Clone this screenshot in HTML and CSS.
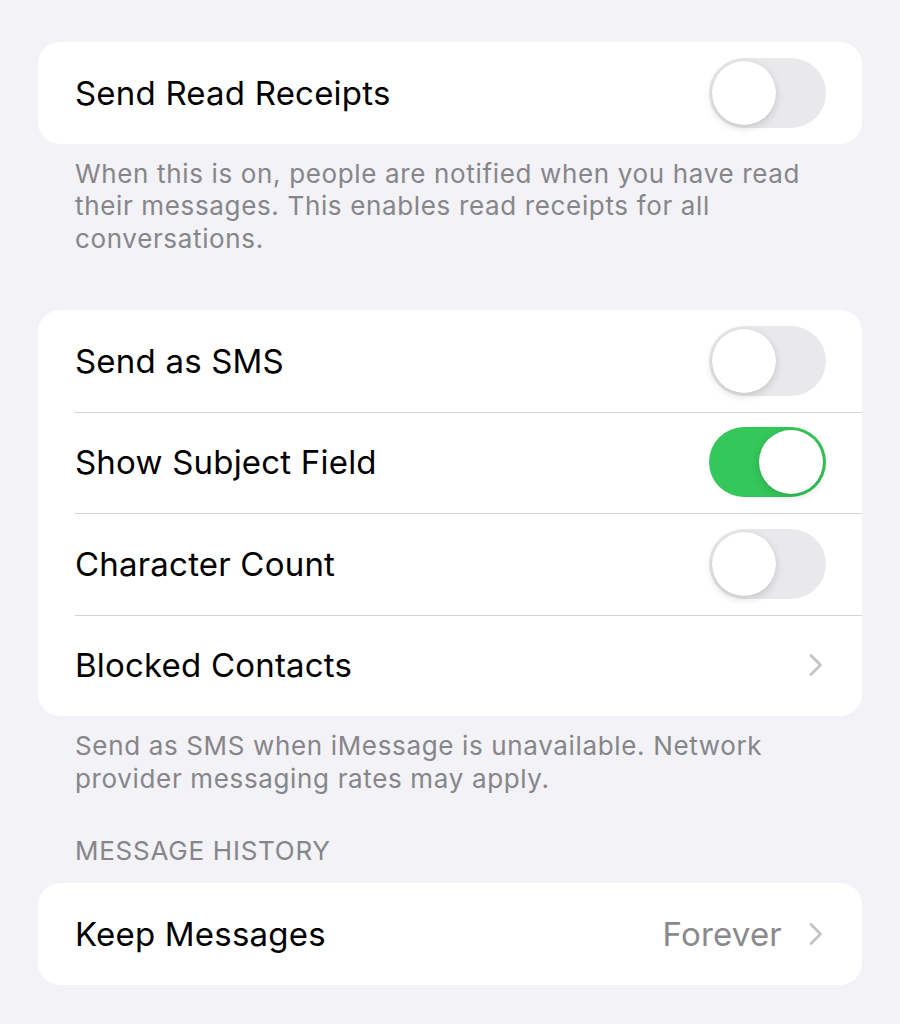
FILE: index.html
```html
<!DOCTYPE html>
<html>
<head>
<meta charset="utf-8">
<link rel="stylesheet" href="styles.css">
</head>
<body>
<div class="page">
  <div class="card">
    <div class="row">
      <span class="label">Send Read Receipts</span>
      <span class="toggle"><span class="knob"></span></span>
    </div>
  </div>
  <p class="footer">When this is on, people are notified when you have read their messages. This enables read receipts for all conversations.</p>

  <div class="card card-2">
    <div class="row">
      <span class="label">Send as SMS</span>
      <span class="toggle"><span class="knob"></span></span>
    </div>
    <div class="row">
      <span class="label">Show Subject Field</span>
      <span class="toggle on"><span class="knob"></span></span>
    </div>
    <div class="row">
      <span class="label">Character Count</span>
      <span class="toggle"><span class="knob"></span></span>
    </div>
    <div class="row">
      <span class="label">Blocked Contacts</span>
      <svg class="chevron" viewBox="0 0 16 24" width="16" height="24"><path d="M3 2.5 L12.5 12 L3 21.5" fill="none" stroke="#c4c4c7" stroke-width="2.8" stroke-linecap="round" stroke-linejoin="round"/></svg>
    </div>
  </div>
  <p class="footer footer-2">Send as SMS when iMessage is unavailable. Network provider messaging rates may apply.</p>

  <p class="header">MESSAGE HISTORY</p>
  <div class="card">
    <div class="row">
      <span class="label">Keep Messages</span>
      <span class="value">Forever</span>
      <svg class="chevron" viewBox="0 0 16 24" width="16" height="24"><path d="M3 2.5 L12.5 12 L3 21.5" fill="none" stroke="#c4c4c7" stroke-width="2.8" stroke-linecap="round" stroke-linejoin="round"/></svg>
    </div>
  </div>
</div>
</body>
</html>
```

FILE: styles.css
```css
html, body {
  margin: 0;
  padding: 0;
  background: #f2f2f7;
}
body {
  font-family: Inter, "Liberation Sans", sans-serif;
  color: #000;
  width: 900px;
  height: 1024px;
  overflow: hidden;
}
.page {
  padding: 42px 38px 0 38px;
}
.card {
  background: #fff;
  border-radius: 22px;
  overflow: hidden;
}
.row {
  height: 101.5px;
  display: flex;
  align-items: center;
  margin-left: 37px;
  padding-right: 36px;
  position: relative;
}
.card-2 .row + .row::before {
  content: "";
  position: absolute;
  left: 0;
  right: 0;
  top: 0;
  height: 1px;
  background: #d1d1d6;
}
.label {
  font-size: 33px;
  letter-spacing: 0.2px;
  flex: 1;
}
.value {
  font-size: 33px;
  letter-spacing: 0.2px;
  color: #8a8a8e;
  margin-right: 26px;
}
.toggle {
  width: 117px;
  height: 70px;
  border-radius: 35px;
  background: #e9e9eb;
  display: flex;
  align-items: center;
  padding: 3px;
  box-sizing: border-box;
}
.toggle .knob {
  width: 64px;
  height: 64px;
  border-radius: 50%;
  background: #fff;
  box-shadow: 0 3px 8px rgba(0,0,0,0.15), 0 0 1px rgba(0,0,0,0.12);
}
.toggle.on {
  background: #34c759;
  justify-content: flex-end;
}
.chevron {
  display: block;
  margin-right: 2px;
}
.footer {
  margin: 14px 0 0 0;
  padding: 0 30px 0 37px;
  font-size: 26px;
  line-height: 32.5px;
  color: #86868a;
  letter-spacing: 0.65px;
}
.card-2 {
  margin-top: 55px;
}
.header {
  margin: 40px 0 16px 0;
  padding: 0 37px;
  font-size: 26px;
  line-height: 32px;
  color: #86868a;
  letter-spacing: 0.75px;
}
```
